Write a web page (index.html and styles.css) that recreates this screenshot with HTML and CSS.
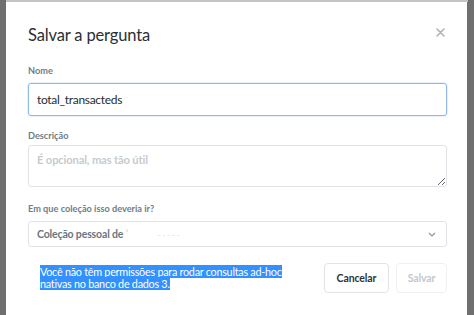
FILE: index.html
```html
<!DOCTYPE html>
<html lang="pt">
<head>
<meta charset="utf-8">
<link rel="stylesheet" href="styles.css">
</head>
<body>
<div class="topline"></div>
<div class="modal">
  <div class="header">
    <h2 class="title">Salvar a pergunta</h2>
    <svg class="close" width="9" height="9" viewBox="0 0 9 9"><path d="M1 1L8 8M8 1L1 8" stroke="#adb4ba" stroke-width="1.6" stroke-linecap="round"/></svg>
  </div>
  <label class="label lbl-nome">Nome</label>
  <div class="input focused">total_transacteds</div>
  <label class="label lbl-desc">Descrição</label>
  <textarea class="textarea" placeholder="É opcional, mas tão útil"></textarea>
  <label class="label lbl-col">Em que coleção isso deveria ir?</label>
  <div class="select">
    <span>Coleção pessoal de <span class="redact">ʼ</span><span class="redact2">- - - - -</span></span>
    <svg class="chev" width="8" height="5" viewBox="0 0 8 5"><path d="M1 1L4 4L7 1" fill="none" stroke="#8a959e" stroke-width="1.2"/></svg>
  </div>
  <div class="footer">
    <p class="msg"><span class="sel">Você não têm permissões para rodar consultas ad&#8209;hoc<br>nativas no banco de dados 3.</span></p>
    <div class="buttons">
      <button class="btn cancel">Cancelar</button>
      <button class="btn save">Salvar</button>
    </div>
  </div>
</div>
</body>
</html>
```
FILE: styles.css
```css
html, body {
  margin: 0;
  padding: 0;
}
body {
  background: #6f6f6f;
  width: 474px;
  height: 315px;
  overflow: hidden;
  font-family: Lato, "Open Sans", sans-serif;
  color: #2e353b;
}
.topline {
  height: 2px;
  margin: 0 6px;
  background: #c4c4c4;
}
.modal {
  margin: 0 7px 0 6px;
  height: 313px;
  background: #fff;
  padding: 0 20px 0 22px;
  display: flex;
  flex-direction: column;
}
.header {
  display: flex;
  justify-content: space-between;
  align-items: flex-start;
  padding-top: 22px;
}
.title {
  margin: 0;
  font-size: 16.5px;
  letter-spacing: -0.15px;
  line-height: 22px;
  font-weight: 400;
  color: #2a3035;
}
.close {
  margin-top: 4px;
  margin-right: 2px;
}
.label {
  display: block;
  font-size: 9.2px;
  font-weight: 700;
  color: #6f7d88;
  line-height: 12px;
}
.lbl-nome { margin-top: 19px; }
.lbl-desc { margin-top: 14px; }
.lbl-col { margin-top: 16px; }
.input {
  margin-top: 6px;
  height: 31px;
  border: 1px solid #8fb8e6;
  border-radius: 3px;
  box-shadow: 0 0 0 0.5px #cfe2f7;
  padding: 0 8px;
  font-size: 12px;
  letter-spacing: -0.3px;
  line-height: 31px;
  color: #262c31;
}
.textarea {
  margin-top: 3px;
  height: 42px;
  box-sizing: border-box;
  border: 1px solid #e0e4e8;
  border-radius: 3px;
  padding: 7px 8px;
  font-family: Lato, "Open Sans", sans-serif;
  font-size: 11.2px;
  letter-spacing: -0.15px;
  font-weight: 700;
  color: #2e353b;
  resize: vertical;
  outline: none;
}
.textarea::placeholder {
  color: #c6cbd0;
}
.select {
  margin-top: 6px;
  height: 24px;
  border: 1px solid #e0e4e8;
  border-radius: 3px;
  padding: 0 8px;
  display: flex;
  justify-content: space-between;
  align-items: center;
  font-size: 10.5px;
  letter-spacing: -0.15px;
  font-weight: 700;
  color: #6b7680;
}
.redact { color: #c8cdd1; font-weight: 400; }
.redact2 { color: #d5d9dc; font-weight: 400; margin-left: 30px; font-size: 8px; }
.chev { margin-right: 2px; }
.footer {
  display: flex;
  justify-content: space-between;
  align-items: flex-start;
  margin-top: 16px;
}
.msg {
  margin: 3px 0 0 12px;
  font-size: 10.8px;
  letter-spacing: -0.25px;
  line-height: 12px;
  white-space: nowrap;
}
.sel {
  background: #3390ff;
  color: #fff;
}
.buttons {
  display: flex;
  gap: 7px;
}
.btn {
  font-family: Lato, "Open Sans", sans-serif;
  font-size: 10.5px;
  letter-spacing: -0.1px;
  font-weight: 700;
  height: 30px;
  border-radius: 4px;
  background: #fff;
  padding: 0;
}
.cancel {
  width: 65px;
  border: 1px solid #e0e4e8;
  color: #2e353b;
}
.save {
  width: 51px;
  border: 1px solid #eef0f2;
  color: #c2c8cd;
}
```
